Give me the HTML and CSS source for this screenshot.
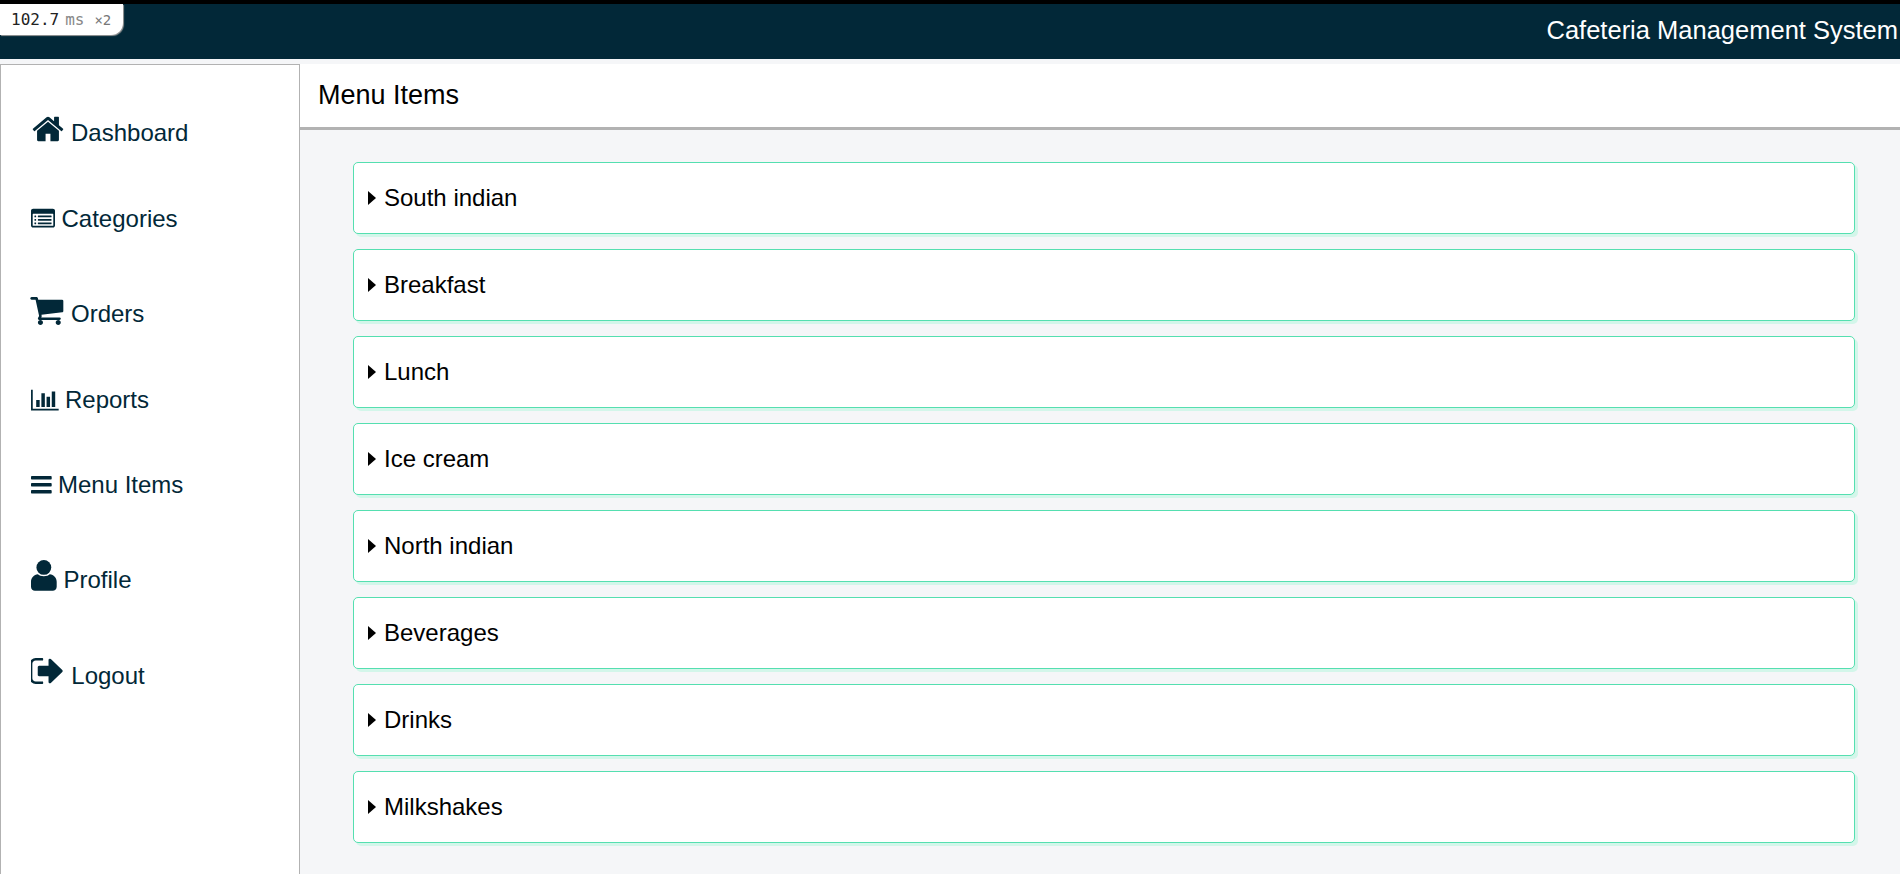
FILE: index.html
```html
<!DOCTYPE html>
<html lang="en">
<head>
<meta charset="utf-8">
<title>Cafeteria Management System</title>
<link rel="stylesheet" href="styles.css">
</head>
<body>
<div class="badge"><span class="b-num">102.7</span><span class="b-unit">ms</span><span class="b-mult">×2</span></div>
<header class="topbar">Cafeteria Management System</header>
<div class="layout">
  <nav class="sidebar">
    <a class="nav-item nav-dashboard"><svg class="ic ic-home" viewBox="0 0 1792 1792"><path d="M1472 992v480q0 26-19 45t-45 19h-384v-384h-256v384h-384q-26 0-45-19t-19-45v-480q0-1 .5-3t.5-3l575-474 575 474q1 2 1 6zm223-69l-62 74q-8 9-21 11h-3q-13 0-21-7l-692-577-692 577q-12 8-24 7-13-2-21-11l-62-74q-8-10-7-23.5t11-21.5l719-599q32-26 76-26t76 26l244 204v-195q0-14 9-23t23-9h192q14 0 23 9t9 23v408l219 182q10 8 11 21.5t-7 23.5z"/></svg>Dashboard</a>
    <a class="nav-item nav-categories"><svg class="ic ic-list" viewBox="0 0 1792 1792"><path d="M384 1184v64q0 13-9.5 22.5t-22.5 9.5h-64q-13 0-22.5-9.5t-9.5-22.5v-64q0-13 9.5-22.5t22.5-9.5h64q13 0 22.5 9.5t9.5 22.5zm0-256v64q0 13-9.5 22.5t-22.5 9.5h-64q-13 0-22.5-9.5t-9.5-22.5v-64q0-13 9.5-22.5t22.5-9.5h64q13 0 22.5 9.5t9.5 22.5zm0-256v64q0 13-9.5 22.5t-22.5 9.5h-64q-13 0-22.5-9.5t-9.5-22.5v-64q0-13 9.5-22.5t22.5-9.5h64q13 0 22.5 9.5t9.5 22.5zm1152 512v64q0 13-9.5 22.5t-22.5 9.5h-960q-13 0-22.5-9.5t-9.5-22.5v-64q0-13 9.5-22.5t22.5-9.5h960q13 0 22.5 9.5t9.5 22.5zm0-256v64q0 13-9.5 22.5t-22.5 9.5h-960q-13 0-22.5-9.5t-9.5-22.5v-64q0-13 9.5-22.5t22.5-9.5h960q13 0 22.5 9.5t9.5 22.5zm0-256v64q0 13-9.5 22.5t-22.5 9.5h-960q-13 0-22.5-9.5t-9.5-22.5v-64q0-13 9.5-22.5t22.5-9.5h960q13 0 22.5 9.5t9.5 22.5zm128 704v-832q0-13-9.5-22.5t-22.5-9.5h-1472q-13 0-22.5 9.5t-9.5 22.5v832q0 13 9.5 22.5t22.5 9.5h1472q13 0 22.5-9.5t9.5-22.5zm128-1088v1088q0 66-47 113t-113 47h-1472q-66 0-113-47t-47-113v-1088q0-66 47-113t113-47h1472q66 0 113 47t47 113z"/></svg>Categories</a>
    <a class="nav-item nav-orders"><svg class="ic ic-cart" viewBox="0 0 1792 1792"><path d="M704 1536q0 52-38 90t-90 38-90-38-38-90 38-90 90-38 90 38 38 90zm896 0q0 52-38 90t-90 38-90-38-38-90 38-90 90-38 90 38 38 90zm128-1088v512q0 24-16.5 42.5t-40.5 21.5l-1044 122q13 60 13 70 0 16-24 64h920q26 0 45 19t19 45-19 45-45 19h-1024q-26 0-45-19t-19-45q0-11 8-31.5t16-36 21.5-40 15.5-29.5l-177-823h-204q-26 0-45-19t-19-45 19-45 45-19h256q16 0 28.5 6.5t19.5 15.5 13 24.5 8 26 5.5 29.5 4.5 26h1201q26 0 45 19t19 45z"/></svg>Orders</a>
    <a class="nav-item nav-reports"><svg class="ic ic-chart" viewBox="0 0 2048 1792"><path d="M640 896v512h-256v-512h256zm384-512v1024h-256v-1024h256zm1024 1152v128h-2048v-1536h128v1408h1920zm-640-896v768h-256v-768h256zm384-384v1152h-256v-1152h256z"/></svg>Reports</a>
    <a class="nav-item nav-menu"><svg class="ic ic-bars" viewBox="128 256 1536 1280" preserveAspectRatio="none"><path d="M1664 1344v128q0 26-19 45t-45 19h-1408q-26 0-45-19t-19-45v-128q0-26 19-45t45-19h1408q26 0 45 19t19 45zm0-512v128q0 26-19 45t-45 19h-1408q-26 0-45-19t-19-45v-128q0-26 19-45t45-19h1408q26 0 45 19t19 45zm0-512v128q0 26-19 45t-45 19h-1408q-26 0-45-19t-19-45v-128q0-26 19-45t45-19h1408q26 0 45 19t19 45z"/></svg>Menu Items</a>
    <a class="nav-item nav-profile"><svg class="ic ic-user" viewBox="0 0 26 31"><circle cx="13" cy="7.5" r="7.5"/><path d="M7 14.5 C9 17 17 17 19 14.5 C23 15 26 18 26 22 V27 C26 29.5 24 31 22 31 H4 C2 31 0 29.5 0 27 V22 C0 18 3 15 7 14.5 Z"/></svg>Profile</a>
    <a class="nav-item nav-logout"><svg class="ic ic-logout" viewBox="128 256 1504 1280" preserveAspectRatio="none"><path d="M704 1440q0 4 1 20t.5 26.5-3 23.5-10 19.5-20.5 6.5h-320q-119 0-203.5-84.5t-84.5-203.5v-704q0-119 84.5-203.5t203.5-84.5h320q13 0 22.5 9.5t9.5 22.5q0 4 1 20t.5 26.5-3 23.5-10 19.5-20.5 6.5h-320q-66 0-113 47t-47 113v704q0 66 47 113t113 47h312l11.5 1 11.5 3 8 5.5 7 9 2 13.5zm928-544q0 26-19 45l-544 544q-19 19-45 19t-45-19-19-45v-288h-448q-26 0-45-19t-19-45v-384q0-26 19-45t45-19h448v-288q0-26 19-45t45-19 45 19l544 544q19 19 19 45z"/></svg>Logout</a>
  </nav>
  <main class="content">
    <h1 class="page-title">Menu Items</h1>
    <div class="cards">
      <div class="card"><span class="caret"></span>South indian</div>
      <div class="card"><span class="caret"></span>Breakfast</div>
      <div class="card"><span class="caret"></span>Lunch</div>
      <div class="card"><span class="caret"></span>Ice cream</div>
      <div class="card"><span class="caret"></span>North indian</div>
      <div class="card"><span class="caret"></span>Beverages</div>
      <div class="card"><span class="caret"></span>Drinks</div>
      <div class="card"><span class="caret"></span>Milkshakes</div>
    </div>
  </main>
</div>
</body>
</html>
```
FILE: styles.css
```css
* { box-sizing: border-box; }
html, body { height: 100%; }
body {
  margin: 0;
  height: 874px;
  overflow: hidden;
  background: #f5f6f8;
  border-top: 4px solid #000;
  font-family: "Liberation Sans", Arial, sans-serif;
  color: #000;
}
.badge {
  position: absolute;
  left: 0;
  top: 4px;
  width: 123px;
  height: 31px;
  padding-left: 11px;
  background: #fff;
  border-bottom-right-radius: 12px;
  box-shadow: 1px 1px 1px #999;
  font-family: "DejaVu Sans Mono", "Liberation Mono", monospace;
  display: flex;
  align-items: center;
  font-size: 16px;
  color: #222;
}
.b-unit { color: #888; margin-left: 6px; }
.b-mult { color: #777; margin-left: 10px; font-size: 14px; }
.topbar {
  height: 55px;
  background: #022838;
  color: #fff;
  display: flex;
  align-items: center;
  justify-content: flex-end;
  font-size: 25.5px;
  padding-right: 2px;
  padding-bottom: 2px;
}
.layout {
  display: flex;
  margin-top: 5px;
  height: 810px;
}
.sidebar {
  flex: 0 0 300px;
  background: #fff;
  border: 1px solid #b2b2b2;
  border-bottom: 0;
  display: flex;
  flex-direction: column;
  position: relative;
}
.nav-item {
  display: flex;
  align-items: flex-end;
  height: 36px;
  color: #022838;
  font-size: 24px;
  line-height: 28px;
  padding-left: 30px;
}
.nav-dashboard { margin-top: 46px; }
.nav-categories { margin-top: 50px; }
.nav-orders { margin-top: 59px; }
.nav-reports { margin-top: 50px; }
.nav-menu { margin-top: 49px; }
.nav-profile { margin-top: 59px; }
.nav-logout { margin-top: 60px; }
.ic { fill: #022838; flex: none; }
.ic-home { width: 34px; height: 34px; margin: 0 6px 1px 0; }
.ic-list { width: 24px; height: 24px; margin: 0 6.5px 2.5px 0; }
.ic-cart { width: 35.6px; height: 35.6px; margin: 0 6.9px 0 -2.5px; }
.ic-chart { width: 27.7px; height: 24.2px; margin: 0 6.3px 2px 0; }
.ic-bars { width: 20.7px; height: 17.6px; margin: 0 6.3px 5.4px 0; }
.ic-user { width: 25.7px; height: 30.7px; margin: 0 6.8px 3px 0; }
.ic-logout { width: 31.7px; height: 26px; margin: 0 8.6px 6px 0; }
.content { flex: 1; display: flex; flex-direction: column; }
.page-title {
  margin: 0;
  height: 66px;
  background: #fff;
  border-bottom: 3px solid #b2b2b2;
  font-weight: 400;
  font-size: 27px;
  padding-left: 18px;
  display: flex;
  align-items: center;
}
.cards {
  display: flex;
  flex-direction: column;
  gap: 15px;
  padding: 32px 45px 0 53px;
}
.card {
  height: 72px;
  background: #fff;
  border: 1px solid #55dfb0;
  border-radius: 5px;
  box-shadow: 3px 3px 0 #d3f6ea;
  display: flex;
  align-items: center;
  font-size: 24px;
  padding-left: 14px;
}
.caret {
  width: 0;
  height: 0;
  border-left: 8px solid #000;
  border-top: 7px solid transparent;
  border-bottom: 7px solid transparent;
  margin-right: 8px;
}
```
